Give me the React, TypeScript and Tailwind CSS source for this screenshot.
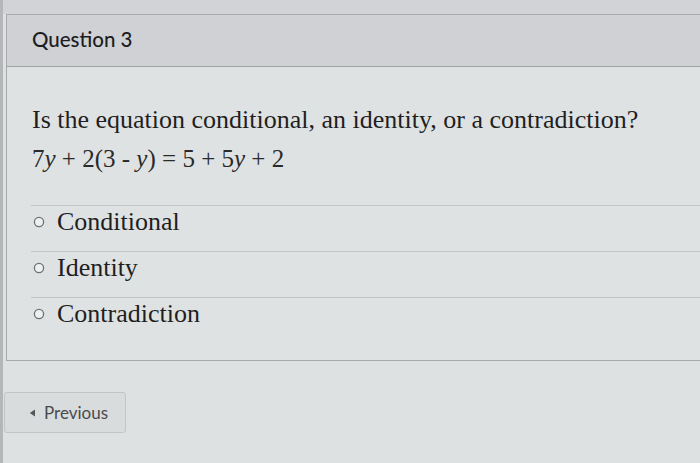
import React from "react";

const Radio = () => (
  <svg width="12" height="12" viewBox="0 0 12 12" className="shrink-0">
    <circle cx="6" cy="6" r="4.6" fill="#eef0f0" stroke="#6f7173" strokeWidth="1.3" />
  </svg>
);

export default function App() {
  const options = ["Conditional", "Identity", "Contradiction"];
  return (
    <div className="w-[700px] h-[463px] overflow-hidden bg-[#dde1e1] border-l-[3px] border-[#b4b6b8] flex flex-col">
      <div className="h-[14px] bg-[#d2d3d7] shrink-0" />
      <div className="ml-[3px] border border-r-0 border-[#a8aaac] flex flex-col">
        <div className="h-[52px] bg-[#cfd1d4] border-b border-[#9fa1a3] flex items-center pl-[25px] pb-[3px]">
          <span className="text-[20.5px] text-[#1d1d1f]" style={{ fontFamily: "Lato, sans-serif", fontWeight: 500 }}>
            Question 3
          </span>
        </div>
        <div className="bg-[#dfe2e3] pt-[37px] pb-[17px]" style={{ fontFamily: '"Liberation Serif", serif' }}>
          <div className="pl-[25px] text-[26px] leading-[32px] text-[#1f1f1f]">
            Is the equation conditional, an identity, or a contradiction?
          </div>
          <div className="pl-[25px] mt-[8px] text-[25px] leading-[30px] text-[#2a2a2a]">
            7<i>y</i> + 2(3 - <i>y</i>) = 5 + 5<i>y</i> + 2
          </div>
          <div className="ml-[24px] mt-[31px] flex flex-col">
            {options.map((o) => (
              <div key={o} className="h-[46px] border-t border-[#c3c6c8] flex items-center gap-[12px] pl-[2px] pb-[14px]">
                <Radio />
                <span className="text-[26px] text-[#1f1f1f] leading-none">{o}</span>
              </div>
            ))}
          </div>
        </div>
      </div>
      <div className="mt-[31px] ml-[1px] w-[122px] h-[41px] border border-[#c2c4c6] rounded-[3px] bg-[#d9dcdd] flex items-center gap-[8px] pl-[24px]">
        <svg width="7" height="8" viewBox="0 0 7 8">
          <path d="M6 0.5 L0.8 4 L6 7.5 Z" fill="#555" />
        </svg>
        <span className="text-[17px] text-[#4a4a4c]" style={{ fontFamily: "Lato, sans-serif" }}>
          Previous
        </span>
      </div>
    </div>
  );
}
